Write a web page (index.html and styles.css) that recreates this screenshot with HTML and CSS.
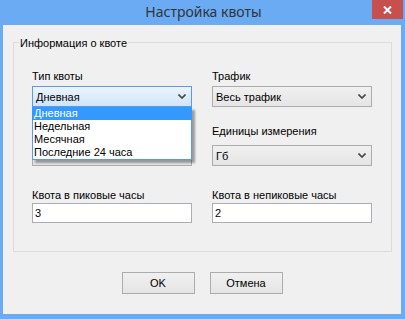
FILE: index.html
```html
<!DOCTYPE html>
<html lang="ru">
<head>
  <meta charset="UTF-8">
  <meta name="viewport" content="width=device-width, initial-scale=1.0">
  <title>Настройка квоты</title>
  <link rel="stylesheet" href="styles.css">
</head>
<body>
  <div class="window">
    <div class="titlebar">
      <span class="title">Настройка квоты</span>
      <button class="close" title="Закрыть">
        <svg width="9" height="8" viewBox="0 0 9 8"><path d="M1 0.5 L8 7.5 M8 0.5 L1 7.5" stroke="#fff" stroke-width="2" fill="none"/></svg>
      </button>
    </div>

    <div class="client">
      <div class="group">
        <span class="legend">Информация о квоте</span>
        <div class="fields">
          <div class="field">
            <label class="label first">Тип квоты</label>
            <div class="combo focused">
              <span>Дневная</span>
              <svg class="arrow" width="8" height="5" viewBox="0 0 8 5"><path d="M0.5 0.5 L4 4 L7.5 0.5" stroke="#444" stroke-width="1.6" fill="none"/></svg>
            </div>
            <ul class="dropdown">
              <li class="selected">Дневная</li>
              <li>Недельная</li>
              <li>Месячная</li>
              <li>Последние 24 часа</li>
            </ul>
          </div>
          <div class="field">
            <label class="label first">Трафик</label>
            <div class="combo">
              <span>Весь трафик</span>
              <svg class="arrow" width="8" height="5" viewBox="0 0 8 5"><path d="M0.5 0.5 L4 4 L7.5 0.5" stroke="#444" stroke-width="1.6" fill="none"/></svg>
            </div>
          </div>

          <div class="field">
            <label class="label second">&nbsp;</label>
            <div class="combo second"><span>&nbsp;</span></div>
          </div>
          <div class="field">
            <label class="label second">Единицы измерения</label>
            <div class="combo second">
              <span>Гб</span>
              <svg class="arrow" width="8" height="5" viewBox="0 0 8 5"><path d="M0.5 0.5 L4 4 L7.5 0.5" stroke="#444" stroke-width="1.6" fill="none"/></svg>
            </div>
          </div>

          <div class="field">
            <label class="label third">Квота в пиковые часы</label>
            <input class="textbox" type="text" value="3">
          </div>
          <div class="field">
            <label class="label third">Квота в непиковые часы</label>
            <input class="textbox" type="text" value="2">
          </div>
        </div>
      </div>

      <div class="actions">
        <button class="btn">OK</button>
        <button class="btn">Отмена</button>
      </div>
    </div>
  </div>
</body>
</html>
```

FILE: styles.css
```css
body {
  margin: 0;
  width: 405px;
  height: 319px;
  overflow: hidden;
  background-color: #6aabf4;
  font-family: 'Liberation Sans', Arial, sans-serif;
  font-size: 11px;
  color: #000;
}
.window {
  display: flex;
  flex-direction: column;
  height: 319px;
}
.titlebar {
  position: relative;
  height: 25px;
  display: flex;
  justify-content: center;
}
.title {
  font-family: 'Noto Sans', sans-serif;
  font-size: 14px;
  line-height: 23px;
  color: #333;
  margin-left: 2px;
}
.close {
  position: absolute;
  top: 0;
  right: 2px;
  width: 31px;
  height: 19px;
  border: none;
  padding: 0;
  background-color: #c7504f;
  display: flex;
  align-items: center;
  justify-content: center;
}
.client {
  flex: 1;
  margin: 0 4px 5px 3px;
  padding: 17px 9px 0 10px;
  background-color: #f0f0f0;
}
.group {
  border: 1px solid #dcdcdc;
  height: 208px;
}
.legend {
  display: block;
  width: fit-content;
  margin: -7px 0 0 5px;
  padding: 0 1px;
  line-height: 14px;
  background-color: #f0f0f0;
}
.fields {
  display: grid;
  grid-template-columns: 160px 160px;
  column-gap: 20px;
  padding-left: 18px;
}
.field {
  position: relative;
  display: flex;
  flex-direction: column;
}
.label {
  line-height: 14px;
}
.label.first {
  margin-top: 19px;
  margin-bottom: 3px;
}
.label.second {
  margin-top: 17px;
  margin-bottom: 7px;
}
.label.third {
  margin-top: 22px;
  margin-bottom: 1px;
}
.combo {
  box-sizing: border-box;
  height: 21px;
  display: flex;
  align-items: center;
  justify-content: space-between;
  padding: 0 5px 0 3px;
  border: 1px solid #acacac;
  background: linear-gradient(#f0f0f0, #e5e5e5);
}
.combo.focused {
  border-color: #569de5;
  background: linear-gradient(#ecf4fc, #cfe5f8);
}
.arrow {
  display: block;
}
.dropdown {
  position: absolute;
  top: 57px;
  left: 0;
  width: 160px;
  box-sizing: border-box;
  margin: 0;
  padding: 0;
  list-style: none;
  background-color: #fff;
  border: 1px solid #569de5;
  border-top: none;
  box-shadow: 3px 3px 2px rgba(0, 0, 0, 0.35);
  z-index: 2;
}
.dropdown li {
  height: 13px;
  line-height: 13px;
  padding-left: 1px;
}
.dropdown li.selected {
  background-color: #3399ff;
  color: #fff;
  margin: 0 -1px;
  padding-left: 2px;
}
.textbox {
  box-sizing: border-box;
  width: 160px;
  height: 20px;
  margin: 0;
  padding: 0 2px;
  border: 1px solid #abadb3;
  background-color: #fff;
  font-family: 'Liberation Sans', Arial, sans-serif;
  font-size: 11px;
  color: #000;
}
.actions {
  display: flex;
  justify-content: center;
  gap: 15px;
  margin-top: 20px;
  padding-right: 1px;
}
.btn {
  width: 73px;
  height: 22px;
  border: 1px solid #acacac;
  background: linear-gradient(#f0f0f0, #e5e5e5);
  font-family: 'Liberation Sans', Arial, sans-serif;
  font-size: 11px;
  color: #000;
  padding: 0;
}
```
